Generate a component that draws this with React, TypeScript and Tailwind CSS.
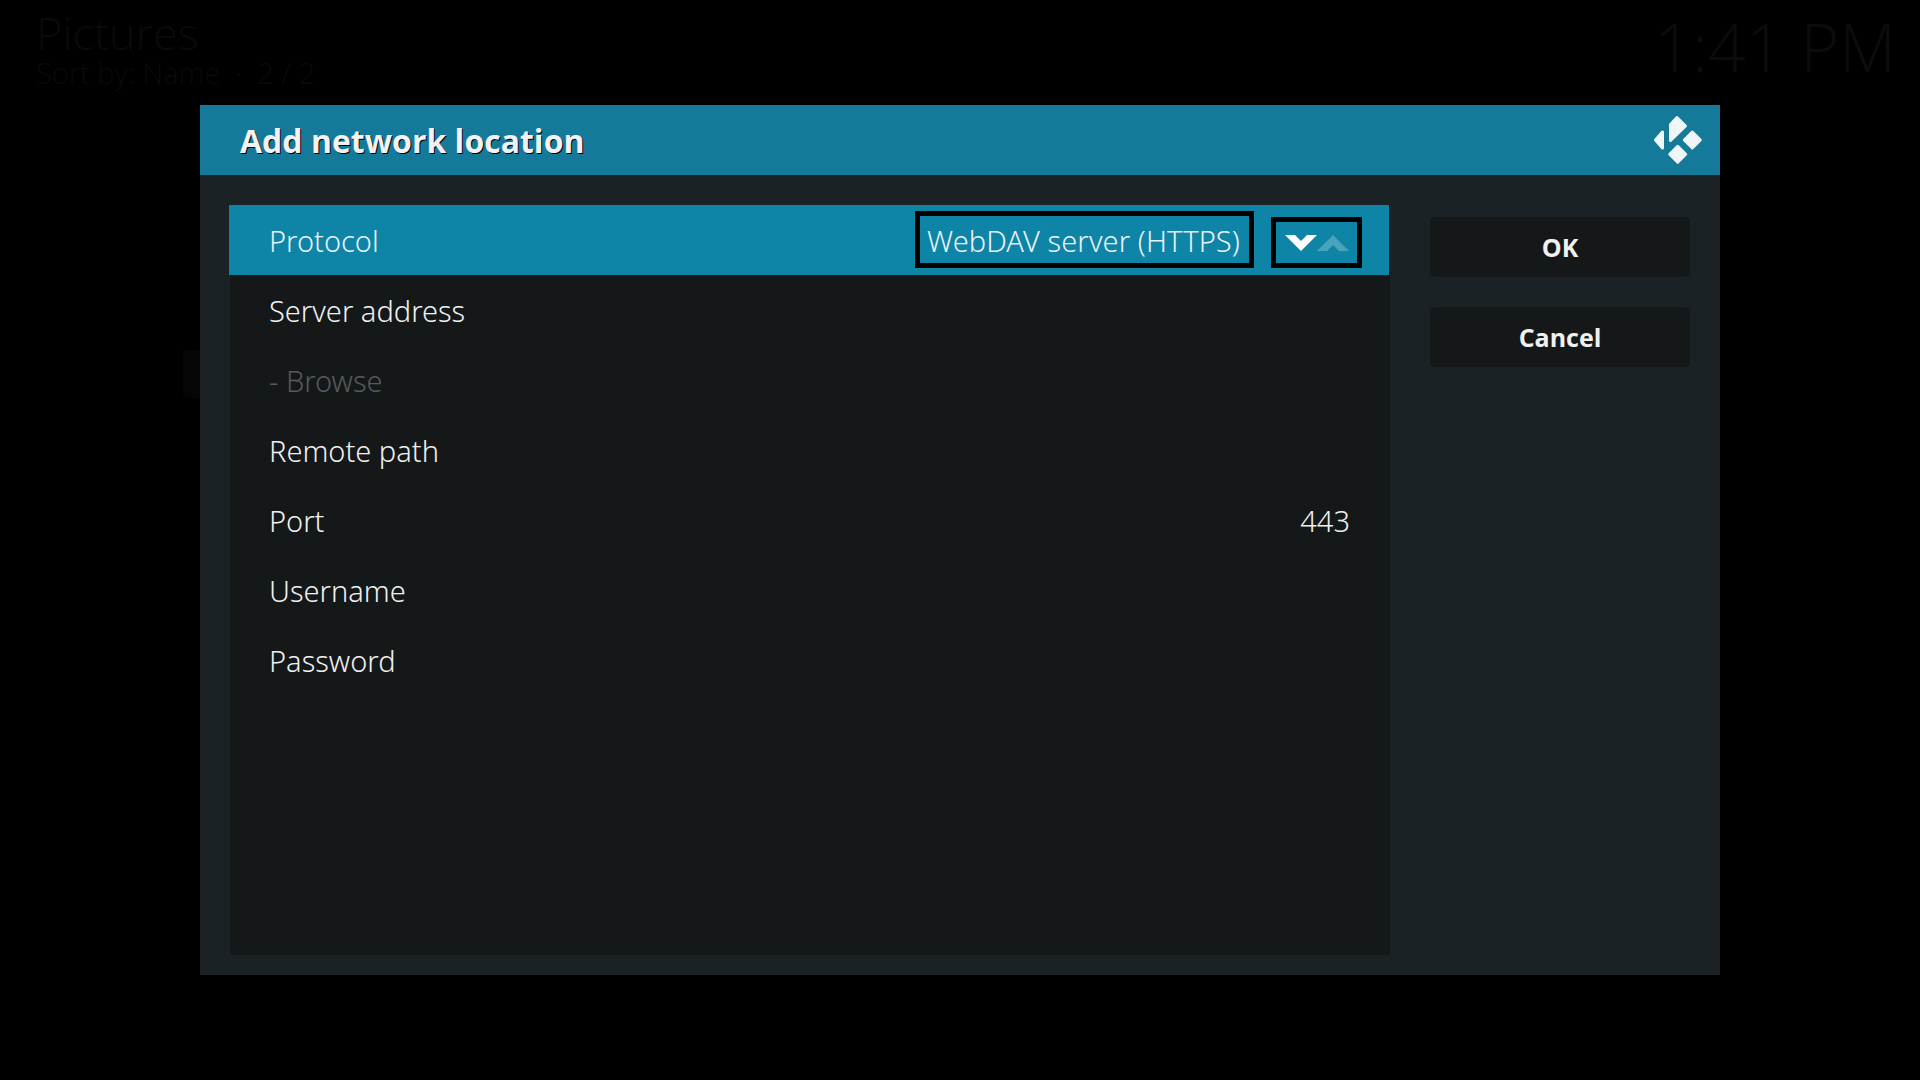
const SANS = "font-['Open_Sans',sans-serif]";

const rows = [
  { label: "Server address" },
  { label: "- Browse", dim: true },
  { label: "Remote path" },
  { label: "Port", value: "443" },
  { label: "Username" },
  { label: "Password" },
];

function KodiLogo() {
  return (
    <svg width="50" height="50" viewBox="-1 -1 50 50" className="mr-[17px] shrink-0">
      <g fill="#eff6f8" stroke="#eff6f8" strokeWidth="3" strokeLinejoin="round">
        <path d="M1.5 24 L8.5 16 L8.5 32 Z" />
        <path d="M16.5 8.5 L23 1.5 L31.5 10 L16.5 24.5 Z" />
        <path d="M38.3 16 L46.3 24 L38.3 32 L30.3 24 Z" />
        <path d="M23.7 30.3 L31.7 38.3 L23.7 46.3 L15.7 38.3 Z" />
      </g>
    </svg>
  );
}

function Spinner() {
  return (
    <div className="flex h-[51px] w-[91px] items-center justify-center border-[5px] border-black">
      <svg width="64" height="16" viewBox="0 0 64 16">
        <path d="M0 0 H10 L16 6 L22 0 H32 L16 16 Z" fill="#ffffff" />
        <path d="M32 16 H42 L48 10 L54 16 H64 L48 0 Z" fill="#ffffff" fillOpacity="0.25" />
      </svg>
    </div>
  );
}

export default function App() {
  return (
    <div className={`relative h-screen w-full overflow-hidden bg-black ${SANS}`}>
      {/* dimmed window behind the dialog */}
      <div className="flex items-start justify-between pl-[36px] pr-[24px]">
        <div className="pt-[10px] text-[#0a0a0a]">
          <div className="text-[45px] font-light leading-[46px]">Pictures</div>
          <div className="text-[29px] font-light leading-[34px]">Sort by: Name&nbsp; ·&nbsp; 2 / 2</div>
        </div>
        <div className="pt-[6px] text-[66px] font-thin leading-[80px] text-[#0c0c0c]">1:41 PM</div>
      </div>
      <div className="absolute left-[183px] top-[350px] h-[48px] w-[17px] rounded-l bg-[#050505]" />

      <div className="absolute left-[200px] top-[105px] flex h-[870px] w-[1520px] flex-col bg-[#1a2225]">
        <div className="flex h-[70px] items-center justify-between bg-[#157a99] pl-[40px]">
          <h1 className="pt-[2px] text-[32px] font-bold text-[#f2f2f2] [text-shadow:1px_1px_0_#000]">Add network location</h1>
          <KodiLogo />
        </div>
        <div className="flex flex-1 pb-[20px] pl-[30px] pr-[30px] pt-[30px]">
          <div className="h-full w-[1160px] rounded-b bg-[#141819] font-['Noto_Sans',sans-serif] text-[29px] font-light text-[#f0f0f0]">
            <div className="-ml-px flex h-[70px] w-[1160px] items-end justify-between bg-[#0e84a6] pb-[7px] pl-[40px] pr-[27px]">
              <span className="mb-[-1px] self-center pt-[7px] text-[#e6f3f7]">Protocol</span>
              <div className="flex items-end gap-[17px]">
                <div className="flex h-[57px] w-[339px] items-center justify-center border-[5px] border-black pr-[2px] pt-[2px] tracking-[0.1px] text-[#e6f3f7]">
                  WebDAV server (HTTPS)
                </div>
                <Spinner />
              </div>
            </div>
            {rows.map((row) => (
              <div key={row.label} className="flex h-[70px] items-center justify-between pl-[39px] pr-[40px] pt-[2px]">
                <span className={row.dim ? "text-[#555a5c]" : ""}>{row.label}</span>
                {row.value && <span>{row.value}</span>}
              </div>
            ))}
          </div>
          <div className="ml-[40px] flex w-[260px] flex-col gap-[30px] pt-[12px]">
            <button className="h-[60px] rounded bg-[#141819] pt-[2px] text-[25px] font-bold text-[#f0f0f0]">OK</button>
            <button className="h-[60px] rounded bg-[#141819] pt-[2px] text-[25px] font-bold text-[#f0f0f0]">Cancel</button>
          </div>
        </div>
      </div>
    </div>
  );
}
